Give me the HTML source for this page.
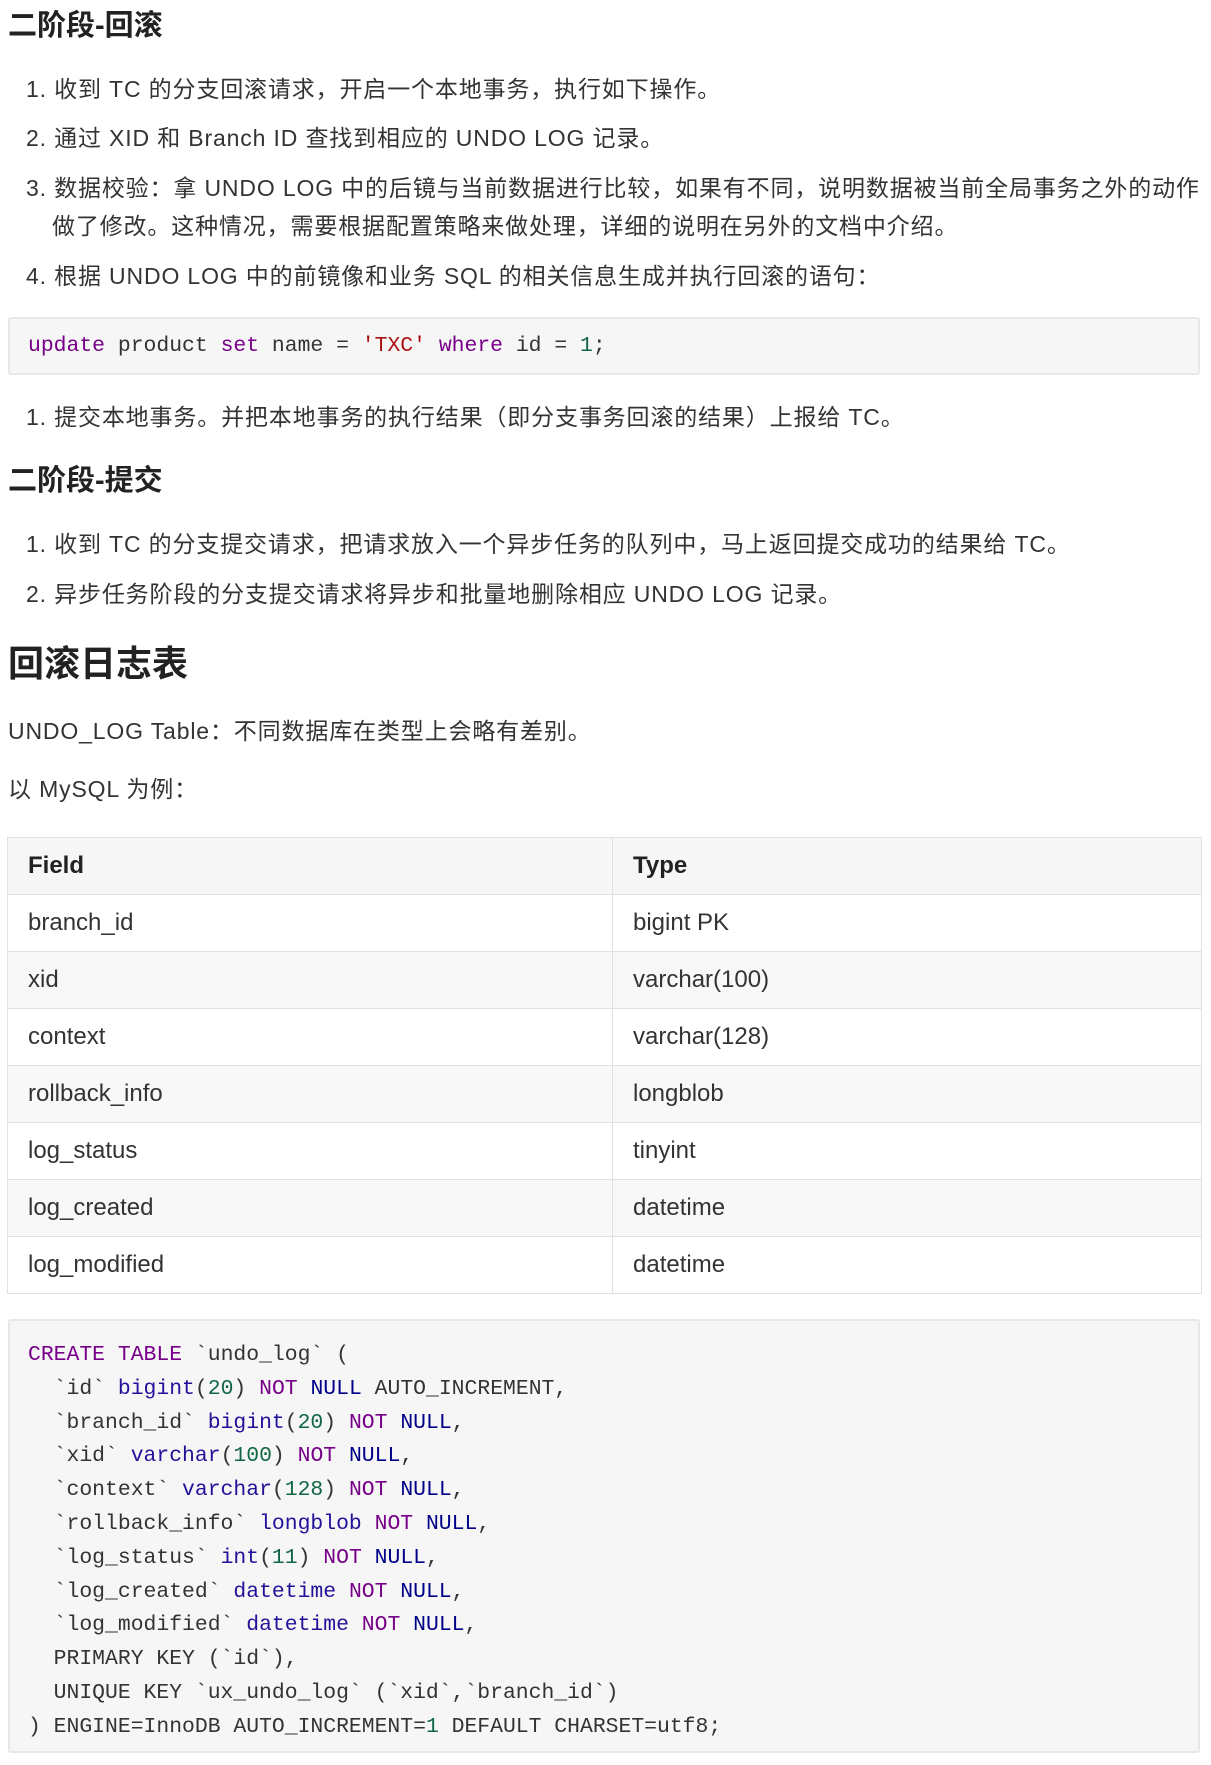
<!DOCTYPE html>
<html><head><meta charset="utf-8"><style>
body{margin:0;width:1211px;height:1765px;background:#fff;color:#333;font-family:"Liberation Sans","Noto Sans CJK SC",sans-serif;position:relative;overflow:hidden}
.a{position:absolute;white-space:nowrap}
h3,h2{margin:0;font-weight:bold;color:#222}
.t{font-size:23px;line-height:34px;letter-spacing:0.85px}
.code{position:absolute;left:8px;width:1192px;background:#f6f6f6;border:2px solid #e6e8ea;border-radius:3px;box-sizing:border-box;font-family:"Liberation Mono",monospace;font-size:21.4px;color:#333;white-space:pre}
.k{color:#770088}.ty{color:#221199}.n{color:#116644}.s{color:#aa1111}.nl{color:#000088}
table{position:absolute;left:7px;top:837px;width:1195px;border-collapse:collapse;font-size:24px}
td,th{border:1.5px solid #dfe2e5;height:57px;padding:0 0 0 20px;text-align:left;box-sizing:border-box}
th{background:#f6f6f6;font-weight:bold;color:#222}
tr:nth-child(odd) td{background:#f8f8f8}
</style></head><body>
<h3 class="a" style="left:8px;top:6px;font-size:29px;line-height:40px">二阶段-回滚</h3>
<div class="a t" style="left:26px;top:72px">1. 收到 TC 的分支回滚请求，开启一个本地事务，执行如下操作。</div>
<div class="a t" style="left:26px;top:121px">2. 通过 XID 和 Branch ID 查找到相应的 UNDO LOG 记录。</div>
<div class="a t" style="left:26px;top:171px">3. 数据校验：拿 UNDO LOG 中的后镜与当前数据进行比较，如果有不同，说明数据被当前全局事务之外的动作</div>
<div class="a t" style="left:52px;top:209px">做了修改。这种情况，需要根据配置策略来做处理，详细的说明在另外的文档中介绍。</div>
<div class="a t" style="left:26px;top:259px">4. 根据 UNDO LOG 中的前镜像和业务 SQL 的相关信息生成并执行回滚的语句：</div>
<div class="code" style="top:317px;height:58px;line-height:54px;padding-left:18px"><span class="k">update</span> product <span class="k">set</span> name = <span class="s">'TXC'</span> <span class="k">where</span> id = <span class="n">1</span>;</div>
<div class="a t" style="left:26px;top:400px">1. 提交本地事务。并把本地事务的执行结果（即分支事务回滚的结果）上报给 TC。</div>
<h3 class="a" style="left:8px;top:461px;font-size:29px;line-height:40px">二阶段-提交</h3>
<div class="a t" style="left:26px;top:527px">1. 收到 TC 的分支提交请求，把请求放入一个异步任务的队列中，马上返回提交成功的结果给 TC。</div>
<div class="a t" style="left:26px;top:577px">2. 异步任务阶段的分支提交请求将异步和批量地删除相应 UNDO LOG 记录。</div>
<h2 class="a" style="left:8px;top:640px;font-size:36px;line-height:48px">回滚日志表</h2>
<div class="a t" style="left:8px;top:714px">UNDO_LOG Table：不同数据库在类型上会略有差别。</div>
<div class="a t" style="left:8px;top:772px">以 MySQL 为例：</div>
<table>
<tr><th style="width:605px">Field</th><th>Type</th></tr>
<tr><td>branch_id</td><td>bigint PK</td></tr>
<tr><td>xid</td><td>varchar(100)</td></tr>
<tr><td>context</td><td>varchar(128)</td></tr>
<tr><td>rollback_info</td><td>longblob</td></tr>
<tr><td>log_status</td><td>tinyint</td></tr>
<tr><td>log_created</td><td>datetime</td></tr>
<tr><td>log_modified</td><td>datetime</td></tr>
</table>
<div class="code" style="top:1319px;height:434px;line-height:33.8px;padding:18px 0 0 18px"><span class="k">CREATE</span> <span class="k">TABLE</span> `undo_log` (
  `id` <span class="ty">bigint</span>(<span class="n">20</span>) <span class="k">NOT</span> <span class="nl">NULL</span> AUTO_INCREMENT,
  `branch_id` <span class="ty">bigint</span>(<span class="n">20</span>) <span class="k">NOT</span> <span class="nl">NULL</span>,
  `xid` <span class="ty">varchar</span>(<span class="n">100</span>) <span class="k">NOT</span> <span class="nl">NULL</span>,
  `context` <span class="ty">varchar</span>(<span class="n">128</span>) <span class="k">NOT</span> <span class="nl">NULL</span>,
  `rollback_info` <span class="ty">longblob</span> <span class="k">NOT</span> <span class="nl">NULL</span>,
  `log_status` <span class="ty">int</span>(<span class="n">11</span>) <span class="k">NOT</span> <span class="nl">NULL</span>,
  `log_created` <span class="ty">datetime</span> <span class="k">NOT</span> <span class="nl">NULL</span>,
  `log_modified` <span class="ty">datetime</span> <span class="k">NOT</span> <span class="nl">NULL</span>,
  PRIMARY KEY (`id`),
  UNIQUE KEY `ux_undo_log` (`xid`,`branch_id`)
) ENGINE=InnoDB AUTO_INCREMENT=<span class="n">1</span> DEFAULT CHARSET=utf8;</div>
</body></html>
